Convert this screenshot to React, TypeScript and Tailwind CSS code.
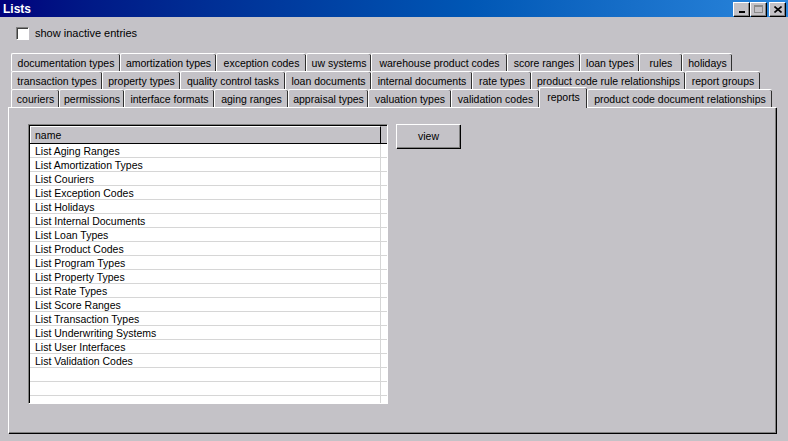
import React from 'react';

type Tab = { label: string; w: number };

const ROWS: Tab[][] = [
  [
    { label: 'documentation types', w: 109 },
    { label: 'amortization types', w: 96 },
    { label: 'exception codes', w: 90 },
    { label: 'uw systems', w: 65 },
    { label: 'warehouse product codes', w: 136 },
    { label: 'score ranges', w: 73 },
    { label: 'loan types', w: 59 },
    { label: 'rules', w: 43 },
    { label: 'holidays', w: 50 },
  ],
  [
    { label: 'transaction types', w: 91 },
    { label: 'property types', w: 78 },
    { label: 'quality control tasks', w: 105 },
    { label: 'loan documents', w: 86 },
    { label: 'internal documents', w: 101 },
    { label: 'rate types', w: 59 },
    { label: 'product code rule relationships', w: 154 },
    { label: 'report groups', w: 75 },
  ],
  [
    { label: 'couriers', w: 48 },
    { label: 'permissions', w: 65 },
    { label: 'interface formats', w: 90 },
    { label: 'aging ranges', w: 74 },
    { label: 'appraisal types', w: 80 },
    { label: 'valuation types', w: 83 },
    { label: 'validation codes', w: 88 },
    { label: 'reports', w: 48 },
    { label: 'product code document relationships', w: 185 },
  ],
];

const REPORTS = [
  'List Aging Ranges',
  'List Amortization Types',
  'List Couriers',
  'List Exception Codes',
  'List Holidays',
  'List Internal Documents',
  'List Loan Types',
  'List Product Codes',
  'List Program Types',
  'List Property Types',
  'List Rate Types',
  'List Score Ranges',
  'List Transaction Types',
  'List Underwriting Systems',
  'List User Interfaces',
  'List Validation Codes',
  '',
  '',
  '',
];

function TabButton({ tab, active }: { tab: Tab; active?: boolean }) {
  if (active) {
    return (
      <div
        className="relative z-10 -mt-[2px] -mb-px h-[21px] border-t border-l border-white rounded-t-[2px] bg-[#c4c2c7] text-center leading-[18px] shadow-[inset_-1px_0_0_#303030]"
        style={{ width: tab.w }}
      >
        {tab.label}
      </div>
    );
  }
  return (
    <div
      className="h-[18px] border-t border-l border-white rounded-t-[2px] text-center leading-[18px] shadow-[inset_-1px_0_0_#303030]"
      style={{ width: tab.w }}
    >
      {tab.label}
    </div>
  );
}

export default function App() {
  return (
    <div className="w-[788px] h-[441px] overflow-hidden bg-[#c4c2c7] font-['Liberation_Sans',Arial,sans-serif] text-[10.5px] text-black">
      {/* Title bar */}
      <div className="h-[17px] flex items-center justify-between bg-gradient-to-r from-[#00007c] to-[#2a86dc] pl-[3px] pr-[3px]">
        <span className="text-white font-bold text-[12px] leading-none">Lists</span>
        <div className="flex items-center">
          <div className="w-[16px] h-[14px] bg-[#c4c2c7] border-t border-l border-white shadow-[inset_-1px_-1px_0_#808080,1px_1px_0_#000] flex items-end justify-center pb-[3px]">
            <div className="w-[6px] h-[2px] bg-black" />
          </div>
          <div className="w-[16px] h-[14px] ml-[1px] bg-[#c4c2c7] border-t border-l border-white shadow-[inset_-1px_-1px_0_#808080,1px_1px_0_#000] flex items-center justify-center">
            <div className="w-[9px] h-[8px] border border-t-2 border-[#8a8a8a]" />
          </div>
          <div className="w-[16px] h-[14px] ml-[3px] bg-[#c4c2c7] border-t border-l border-white shadow-[inset_-1px_-1px_0_#808080,1px_1px_0_#000] flex items-center justify-center">
            <svg width="8" height="7" viewBox="0 0 8 7">
              <path d="M0.5 0.5 L7.5 6.5 M7.5 0.5 L0.5 6.5" stroke="#000" strokeWidth="1.6" />
            </svg>
          </div>
        </div>
      </div>

      {/* Checkbox */}
      <div className="flex items-center pt-[10px] pl-[16px]">
        <div className="w-[13px] h-[13px] bg-white border border-[#808080] border-r-white border-b-white shadow-[inset_1px_1px_0_#404040]" />
        <span className="ml-[6px] text-[11px] leading-[13px]">show inactive entries</span>
      </div>

      {/* Tabs */}
      <div className="mt-[13px] pl-[11px] flex flex-col">
        {ROWS.map((row, i) => (
          <div key={i} className="flex">
            {row.map((t) => (
              <TabButton key={t.label} tab={t} active={t.label === 'reports'} />
            ))}
          </div>
        ))}
      </div>

      {/* Panel */}
      <div className="ml-[8px] w-[768px] h-[326px] border-t border-l border-white shadow-[inset_-1px_-1px_0_#808080,1px_1px_0_#000] flex items-start pl-[19px] pt-[16px]">
        <div className="w-[360px] h-[280px] border border-[#808080] border-r-white border-b-white bg-white shadow-[inset_1px_1px_0_#000] overflow-hidden">
          <div className="flex h-[18px] mt-px ml-px bg-[#c4c2c7] border-b border-black">
            <div className="w-[351px] border-t border-l border-white border-r border-r-black pl-[4px] leading-[16px]">
              name
            </div>
          </div>
          <div className="ml-px">
            {REPORTS.map((r, i) => (
              <div key={i} className="flex h-[14px] border-b border-[#d6d6d6]">
                <div className="w-[351px] pl-[5px] leading-[14px] border-r border-[#d6d6d6]">{r}</div>
              </div>
            ))}
          </div>
        </div>
        <div className="ml-[8px] w-[64px] h-[24px] border-t border-l border-white shadow-[inset_-1px_-1px_0_#808080,1px_1px_0_#000] flex items-center justify-center">
          view
        </div>
      </div>
    </div>
  );
}
